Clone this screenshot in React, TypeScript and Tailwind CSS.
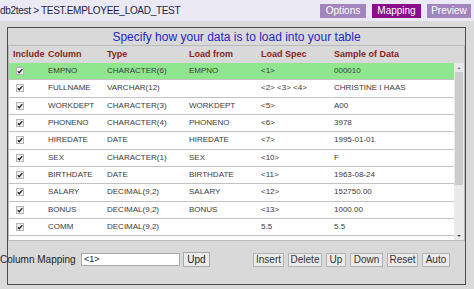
import { ReactNode } from "react";

const rows = [
  { col: "EMPNO", type: "CHARACTER(6)", from: "EMPNO", spec: "<1>", sample: "000010", sel: true },
  { col: "FULLNAME", type: "VARCHAR(12)", from: "", spec: "<2> <3> <4>", sample: "CHRISTINE I HAAS" },
  { col: "WORKDEPT", type: "CHARACTER(3)", from: "WORKDEPT", spec: "<5>", sample: "A00" },
  { col: "PHONENO", type: "CHARACTER(4)", from: "PHONENO", spec: "<6>", sample: "3978" },
  { col: "HIREDATE", type: "DATE", from: "HIREDATE", spec: "<7>", sample: "1995-01-01" },
  { col: "SEX", type: "CHARACTER(1)", from: "SEX", spec: "<10>", sample: "F" },
  { col: "BIRTHDATE", type: "DATE", from: "BIRTHDATE", spec: "<11>", sample: "1963-08-24" },
  { col: "SALARY", type: "DECIMAL(9,2)", from: "SALARY", spec: "<12>", sample: "152750.00" },
  { col: "BONUS", type: "DECIMAL(9,2)", from: "BONUS", spec: "<13>", sample: "1000.00" },
  { col: "COMM", type: "DECIMAL(9,2)", from: "", spec: "5.5", sample: "5.5" },
  { col: "", type: "", from: "", spec: "", sample: "" },
];

const grid = "grid grid-cols-[39px_59px_82px_72px_73px_1fr]";

function Check() {
  return (
    <svg width="8" height="8" viewBox="0 0 8 8">
      <rect x="0.5" y="0.5" width="7" height="7" fill="#f2f2f2" stroke="#b4b4b4" />
      <path d="M1.8 4.2 L3.3 5.7 L6.3 2.2" fill="none" stroke="#222" strokeWidth="1.3" />
    </svg>
  );
}

function Btn({ w, children }: { w: string; children: ReactNode }) {
  return (
    <div
      className={`${w} h-[14px] flex items-center justify-center bg-[#ebebeb] border border-[#b3b3b3] text-[10px] text-[#333] leading-none`}
    >
      {children}
    </div>
  );
}

export default function App() {
  return (
    <div className="w-[474px] h-[289px] overflow-hidden bg-[#dadada] font-['Liberation_Sans',Arial,sans-serif]">
      {/* top bar */}
      <div className="h-[21px] bg-[#ebe9f3] flex items-center">
        <span className="text-[10px] tracking-[-0.3px] text-[#23234a] leading-none">
          db2test &gt; TEST.EMPLOYEE_LOAD_TEST
        </span>
        <div className="ml-auto mr-[3px] flex gap-[6px] text-[10px] leading-none text-white">
          <div className="w-[46px] h-[14px] bg-[#a385bd] flex items-center justify-center">Options</div>
          <div className="w-[49px] h-[14px] bg-[#8b0d8b] flex items-center justify-center">Mapping</div>
          <div className="w-[44px] h-[14px] bg-[#a385bd] flex items-center justify-center">Preview</div>
        </div>
      </div>

      {/* panel */}
      <div className="ml-[7px] mt-[6px] w-[459px] h-[258px] border border-[#4d4d4d] bg-[#d9d9d9] flex flex-col">
        <div className="h-[17px] flex items-center justify-center text-[12px] text-[#2525c8] leading-none">
          Specify how your data is to load into your table
        </div>

        <div className="border border-[#bababa] flex flex-col">
          <div
            className={`${grid} h-[17px] items-center text-[9px] font-bold text-[#8a1c1c] font-['Liberation_Sans_Narrow','Liberation_Sans',sans-serif] leading-none`}
          >
            <span className="pl-[4px]">Include</span>
            <span>Column</span>
            <span>Type</span>
            <span>Load from</span>
            <span>Load Spec</span>
            <span>Sample of Data</span>
          </div>

          <div className="h-[177px] flex overflow-hidden">
            <div className="flex-1 overflow-hidden">
              {rows.map((r, i) => (
                <div
                  key={i}
                  className={`${grid} h-[17.33px] items-center border-b border-[#c2c2c2] text-[8px] text-[#3a3a3a] leading-none font-['Liberation_Sans_Narrow','Liberation_Sans',sans-serif] ${
                    r.sel ? "bg-[#8fe68f]" : "bg-white"
                  }`}
                >
                  <span className="pl-[7px] flex">
                    <Check />
                  </span>
                  <span>{r.col}</span>
                  <span>{r.type}</span>
                  <span>{r.from}</span>
                  <span>{r.spec}</span>
                  <span>{r.sample}</span>
                </div>
              ))}
            </div>
            {/* scrollbar */}
            <div className="w-[10px] bg-[#e9e9e9] flex flex-col items-center">
              <div className="h-[9px] flex items-center justify-center">
                <div className="w-0 h-0 border-l-[2px] border-r-[2px] border-b-[2px] border-l-transparent border-r-transparent border-b-[#8a8a8a]" />
              </div>
              <div className="w-[8px] h-[113px] bg-[#cbcbcb]" />
              <div className="flex-1" />
              <div className="h-[9px] flex items-center justify-center">
                <div className="w-0 h-0 border-l-[2px] border-r-[2px] border-t-[2px] border-l-transparent border-r-transparent border-t-[#555]" />
              </div>
            </div>
          </div>
        </div>

        {/* bottom controls */}
        <div className="flex items-start pt-[12px] text-[10px] text-[#222]">
          <span className="ml-[-8px] w-[81px] h-[14px] flex items-center leading-none">Column Mapping</span>
          <div className="w-[99px] h-[13px] bg-white border border-[#a9a9a9] flex items-center pl-[2px] text-[9px] leading-none">
            &lt;1&gt;
          </div>
          <div className="ml-[3px] mt-[-1px] w-[27px] h-[15px] flex items-center justify-center bg-[#ebebeb] border border-[#a9a9a9] leading-none">
            Upd
          </div>
          <div className="ml-[43px] flex gap-[4px]">
            <Btn w="w-[31px]">Insert</Btn>
            <Btn w="w-[34px]">Delete</Btn>
            <Btn w="w-[20px]">Up</Btn>
            <Btn w="w-[33px]">Down</Btn>
            <Btn w="w-[31px]">Reset</Btn>
            <Btn w="w-[28px]">Auto</Btn>
          </div>
        </div>
      </div>
    </div>
  );
}
